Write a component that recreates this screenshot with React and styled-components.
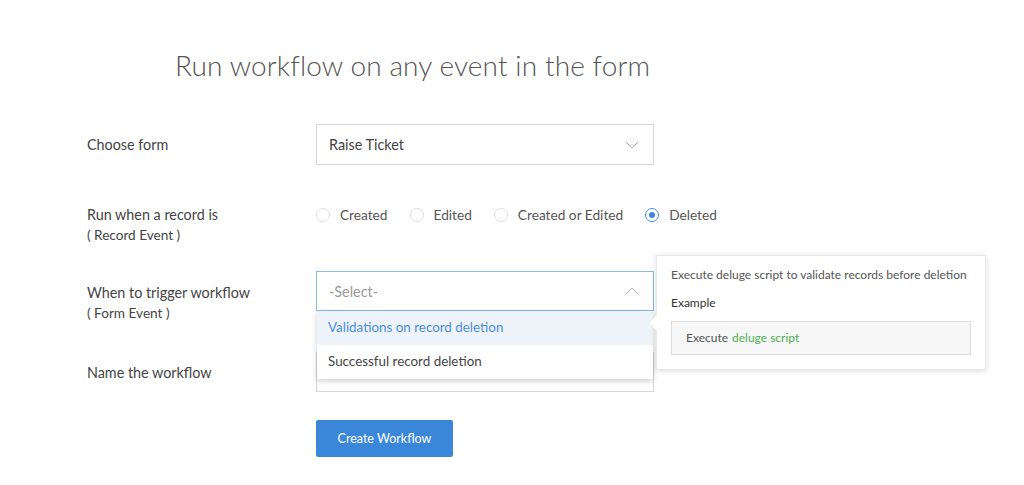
import React from "react";
import styled, { createGlobalStyle } from "styled-components";

const Global = createGlobalStyle`
  html, body { margin: 0; padding: 0; background: #fff; }
  body { font-family: Lato, "Open Sans", sans-serif; color: #444; }
  * { box-sizing: border-box; }
`;

const Page = styled.div`
  width: 1024px;
  height: 485px;
  padding: 45px 0 0 87px;
  overflow: hidden;
`;

const Title = styled.h1`
  margin: 0 0 0 88px;
  font-family: Lato, sans-serif;
  font-weight: 300;
  font-size: 28px;
  line-height: 40px;
  color: #555;
  letter-spacing: 0.12px;
`;

const Form = styled.div`
  display: flex;
  flex-direction: column;
  margin-top: 39px;
`;

const Row = styled.div`
  display: grid;
  grid-template-columns: 229px 338px;
  align-items: ${(p) => p.$align || "center"};
  margin-top: ${(p) => p.$mt || 0}px;
`;

const Label = styled.div`
  font-size: 14.35px;
  line-height: 21px;
  color: #444;
  padding-top: ${(p) => p.$pt || 0}px;
`;

const Sub = styled.div`
  font-size: 13.6px;
  line-height: 20px;
  color: #444;
`;

const Control = styled.div`
  position: relative;
`;

const SelectBox = styled.div`
  height: ${(p) => p.$h || 41}px;
  border: 1px solid ${(p) => (p.$active ? "#8bb8ea" : "#d6d6d6")};
  display: flex;
  align-items: center;
  justify-content: space-between;
  padding: 0 14px 0 12px;
  font-size: 14.4px;
  color: ${(p) => (p.$placeholder ? "#999" : "#444")};
  background: #fff;
`;

const Chevron = ({ up }) => (
  <svg width="14" height="8" viewBox="0 0 14 8">
    <path
      d={up ? "M1 7 L7 1 L13 7" : "M1 1 L7 7 L13 1"}
      fill="none"
      stroke="#b5b5b5"
      strokeWidth="1"
    />
  </svg>
);

const Radios = styled.div`
  display: flex;
  align-items: center;
  height: 21px;
  white-space: nowrap;
`;

const RadioItem = styled.label`
  display: flex;
  align-items: center;
  gap: 10px;
  margin-right: 22px;
  font-size: 13.7px;
  color: #555;
  flex-shrink: 0;
`;

const Circle = styled.span`
  width: 14px;
  height: 14px;
  border-radius: 50%;
  border: 1px solid ${(p) => (p.$checked ? "#4a8fdd" : "#dedede")};
  display: flex;
  align-items: center;
  justify-content: center;
  &::after {
    content: "";
    width: 6px;
    height: 6px;
    border-radius: 50%;
    background: ${(p) => (p.$checked ? "#3d86da" : "transparent")};
  }
`;

const Menu = styled.div`
  position: absolute;
  top: 100%;
  left: 1px;
  right: 1px;
  background: #fff;
  box-shadow: 0 2px 6px rgba(0, 0, 0, 0.2);
  z-index: 5;
`;

const Option = styled.div`
  height: 34px;
  display: flex;
  align-items: center;
  padding: 0 0 2px 11px;
  font-size: 13.4px;
  color: ${(p) => (p.$hl ? "#4a8fdd" : "#444")};
  background: ${(p) => (p.$hl ? "#eef3fa" : "#fff")};
`;

const Popover = styled.div`
  position: absolute;
  left: 340px;
  top: -16px;
  width: 330px;
  height: 115px;
  background: #fff;
  border: 1px solid #e8e8e8;
  box-shadow: 0 1px 6px rgba(0, 0, 0, 0.14);
  padding: 11px 14px 0 14px;
  z-index: 6;
  &::before {
    content: "";
    position: absolute;
    left: -9px;
    top: 58px;
    width: 0;
    height: 0;
    border-top: 9px solid transparent;
    border-bottom: 9px solid transparent;
    border-right: 9px solid #e6e6e6;
  }
  &::after {
    content: "";
    position: absolute;
    left: -8px;
    top: 59px;
    width: 0;
    height: 0;
    border-top: 8px solid transparent;
    border-bottom: 8px solid transparent;
    border-right: 8px solid #fff;
  }
`;

const PopText = styled.div`
  font-size: 12px;
  line-height: 16px;
  color: #555;
`;

const PopHead = styled.div`
  font-size: 12px;
  line-height: 16px;
  color: #333;
  margin-top: 12px;
`;

const Example = styled.div`
  margin-top: 10px;
  height: 34px;
  border: 1px solid #dcdcdc;
  background: #f7f7f7;
  display: flex;
  align-items: center;
  padding: 0 0 2px 14px;
  font-size: 12px;
  color: #555;
`;

const Green = styled.span`
  color: #4cb050;
  margin-left: 4px;
`;

const Button = styled.button`
  width: 137px;
  height: 37px;
  border: none;
  border-radius: 2px;
  background: #3a87da;
  color: #fff;
  font-family: Lato, sans-serif;
  font-size: 12.5px;
  padding: 0 0 1px 0;
  cursor: pointer;
`;

export default function App() {
  const radios = ["Created", "Edited", "Created or Edited", "Deleted"];
  return (
    <Page>
      <Global />
      <Title>Run workflow on any event in the form</Title>
      <Form>
        <Row>
          <Label>Choose form</Label>
          <Control>
            <SelectBox>
              <span>Raise Ticket</span>
              <Chevron />
            </SelectBox>
          </Control>
        </Row>
        <Row $align="start" $mt={39}>
          <div>
            <Label>Run when a record is</Label>
            <Sub>( Record Event )</Sub>
          </div>
          <Radios>
            {radios.map((r) => (
              <RadioItem key={r}>
                <Circle $checked={r === "Deleted"} />
                {r}
              </RadioItem>
            ))}
          </Radios>
        </Row>
        <Row $align="start" $mt={26}>
          <div>
            <Label $pt={11}>When to trigger workflow</Label>
            <Sub>( Form Event )</Sub>
          </div>
          <Control>
            <SelectBox $active $placeholder $h={40}>
              <span>-Select-</span>
              <Chevron up />
            </SelectBox>
            <Menu>
              <Option $hl>Validations on record deletion</Option>
              <Option>Successful record deletion</Option>
            </Menu>
            <Popover>
              <PopText>Execute deluge script to validate records before deletion</PopText>
              <PopHead>Example</PopHead>
              <Example>
                Execute<Green>deluge script</Green>
              </Example>
            </Popover>
          </Control>
        </Row>
        <Row $mt={29}>
          <Label>Name the workflow</Label>
          <Control>
            <SelectBox $h={40} />
          </Control>
        </Row>
        <Row $mt={28}>
          <div />
          <div>
            <Button>Create Workflow</Button>
          </div>
        </Row>
      </Form>
    </Page>
  );
}
